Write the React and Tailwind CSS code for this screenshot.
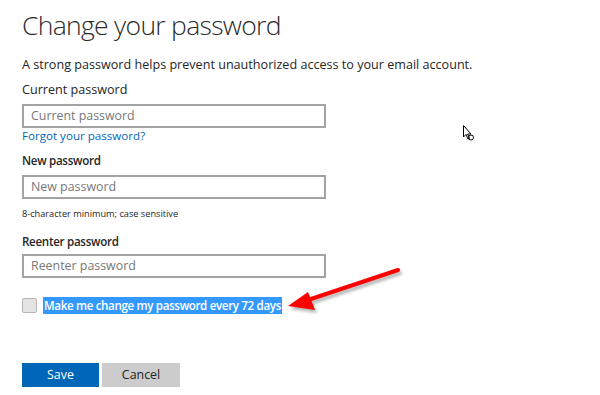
import React from "react";

function Field({ placeholder }) {
  return (
    <div className="w-[304px] h-[24px] border-2 border-[#a3a3a3] bg-white flex items-center pl-[7px] text-[12.4px] text-[#777777]">
      {placeholder}
    </div>
  );
}

export default function App() {
  return (
    <div
      className="relative w-[600px] h-[395px] bg-white overflow-hidden text-[#262626]"
      style={{ fontFamily: '"Open Sans", "Noto Sans", sans-serif' }}
    >
      <div className="pl-[22px] pt-[5px] flex flex-col items-start">
        <h1 className="text-[26.5px] font-light leading-[40px] tracking-[-0.7px] text-[#2b2b2b]">Change your password</h1>
        <p className="mt-[11px] text-[12.6px] leading-[18px]">
          A strong password helps prevent unauthorized access to your email account.
        </p>
        <div className="mt-[7px] text-[12.6px] leading-[18px]">Current password</div>
        <div className="mt-[5px]">
          <Field placeholder="Current password" />
        </div>
        <a className="mt-[1px] text-[11.6px] leading-[14px] text-[#0067b8]">Forgot your password?</a>
        <div className="mt-[9px] text-[11.6px] leading-[18px] font-semibold tracking-[-0.3px]">New password</div>
        <div className="mt-[5px]">
          <Field placeholder="New password" />
        </div>
        <div className="mt-[8px] text-[9.2px] leading-[14px]">8-character minimum; case sensitive</div>
        <div className="mt-[12px] text-[11.6px] leading-[18px] font-semibold tracking-[-0.3px]">Reenter password</div>
        <div className="mt-[3px]">
          <Field placeholder="Reenter password" />
        </div>
        <div className="mt-[19px] flex items-center gap-[6px]">
          <div className="w-[15px] h-[15px] rounded-[2px] border border-[#b5b5b5] bg-[#e4e4e4]" />
          <span className="bg-[#3399ff] text-white text-[11.6px] font-semibold leading-[17px] tracking-[-0.35px] px-[1px]">
            Make me change my password every 72 days
          </span>
        </div>
        <div className="mt-[49px] flex gap-[3px]">
          <button className="w-[77px] h-[24px] bg-[#0067b8] text-white text-[12.4px]">Save</button>
          <button className="w-[78px] h-[24px] bg-[#cccccc] text-[#222] text-[12.4px]">Cancel</button>
        </div>
      </div>

      <svg className="absolute left-0 top-0" width="600" height="395" viewBox="0 0 600 395">
        <defs>
          <filter id="blur" x="-20%" y="-20%" width="140%" height="140%">
            <feGaussianBlur stdDeviation="1.5" />
          </filter>
        </defs>
        <g fill="#000" stroke="#000" opacity="0.28" filter="url(#blur)" transform="translate(2,3)">
          <line x1="398" y1="270" x2="308" y2="300" strokeWidth="4" strokeLinecap="round" />
          <polygon points="288,306 308,292 315,310" stroke="none" />
        </g>
        <line x1="398" y1="270" x2="308" y2="300" stroke="#ff0000" strokeWidth="4" strokeLinecap="round" />
        <polygon points="288,306 308,292 315,310" fill="#ff0000" />
        <g transform="translate(463,125)">
          <path d="M0.5 0.5 L0.5 12 L3 9.5 L5 14 L6.5 13.3 L4.6 9 L8 9 Z" fill="#fff" stroke="#000" strokeWidth="1" strokeLinejoin="round" />
          <circle cx="8" cy="12.5" r="2.5" fill="none" stroke="#000" strokeWidth="1" />
        </g>
      </svg>
    </div>
  );
}
